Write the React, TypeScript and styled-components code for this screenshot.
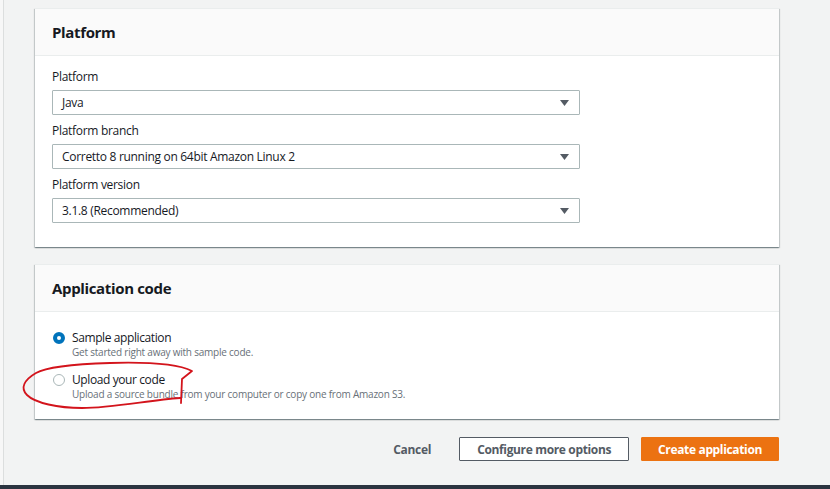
import React from "react";
import styled, { createGlobalStyle } from "styled-components";

const Global = createGlobalStyle`
  html, body {
    margin: 0;
    padding: 0;
    background: #f2f3f3;
    font-family: "Open Sans", "Noto Sans", sans-serif;
    color: #16191f;
  }
  * { box-sizing: border-box; }
`;

const Shell = styled.div`
  position: relative;
  width: 830px;
  height: 489px;
  overflow: hidden;
  display: flex;
  flex-direction: column;
  background: #f2f3f3;
`;

const Body = styled.div`
  flex: 1;
  display: flex;
  min-height: 0;
`;

const Rail = styled.div`
  width: 4px;
  background: #f7f7f7;
  border-right: 1px solid #dcdede;
`;

const Main = styled.main`
  flex: 1;
  padding: 8px 0 0 31px;
  display: flex;
  flex-direction: column;
  gap: 17px;
  width: 775px;
`;

const Panel = styled.section`
  width: 744px;
  background: #fff;
  border-top: 1px solid #eaeded;
  box-shadow: 0 1px 1px 0 rgba(0, 28, 36, 0.3), 1px 1px 1px 0 rgba(0, 28, 36, 0.15),
    -1px 1px 1px 0 rgba(0, 28, 36, 0.15);
`;

const PanelHeader = styled.header`
  height: 47px;
  background: #fafafa;
  border-bottom: 1px solid #eaeded;
  display: flex;
  align-items: center;
  padding: 0 17px;
`;

const PanelTitle = styled.h2`
  margin: 0 0 1px;
  font-size: 15px;
  font-weight: 700;
  letter-spacing: -0.35px;
  color: #16191f;
`;

const PanelBody = styled.div<{ $pad: string }>`
  padding: ${(p) => p.$pad};
  display: flex;
  flex-direction: column;
`;

const Field = styled.div`
  display: flex;
  flex-direction: column;
  margin-bottom: 8px;
  &:last-child { margin-bottom: 0; }
`;

const Label = styled.label`
  font-size: 12px;
  line-height: 16px;
  letter-spacing: -0.3px;
  color: #16191f;
  margin-bottom: 5px;
`;

const Select = styled.div`
  width: 528px;
  height: 25px;
  border: 1px solid #aab7b8;
  border-radius: 1px;
  display: flex;
  align-items: center;
  justify-content: space-between;
  padding: 0 10px 0 9px;
  font-size: 12px;
  letter-spacing: -0.3px;
  color: #16191f;
`;

const Caret = styled.svg`
  width: 9px;
  height: 6px;
  fill: #545b64;
`;

const RadioRow = styled.div`
  display: flex;
  align-items: flex-start;
  gap: 7px;
  margin-bottom: 13px;
  &:last-child { margin-bottom: 0; }
`;

const RadioDot = styled.span<{ $on?: boolean }>`
  width: 12px;
  height: 12px;
  border-radius: 50%;
  margin-top: 2px;
  flex-shrink: 0;
  background: #fff;
  border: ${(p) => (p.$on ? "4px solid #0073bb" : "1px solid #aab7b8")};
`;

const RadioText = styled.div`
  display: flex;
  flex-direction: column;
`;

const RadioLabel = styled.span`
  font-size: 12px;
  line-height: 16px;
  letter-spacing: -0.4px;
  color: #16191f;
`;

const RadioHint = styled.span`
  font-size: 10px;
  line-height: 13px;
  letter-spacing: -0.22px;
  color: #687078;
`;

const Actions = styled.div`
  width: 744px;
  display: flex;
  justify-content: flex-end;
  align-items: center;
  margin-top: 1px;
`;

const LinkButton = styled.button`
  background: none;
  border: none;
  font-family: inherit;
  font-size: 12px;
  font-weight: 700;
  letter-spacing: -0.3px;
  color: #545b64;
  padding: 0;
  margin-right: 28px;
`;

const Button = styled.button<{ $primary?: boolean }>`
  height: 24px;
  padding: 0 ${(p) => (p.$primary ? "16px" : "17px")};
  margin-left: ${(p) => (p.$primary ? "12px" : "0")};
  font-family: inherit;
  font-size: 12px;
  font-weight: 700;
  letter-spacing: -0.35px;
  border-radius: 1px;
  background: ${(p) => (p.$primary ? "#ec7211" : "#fff")};
  color: ${(p) => (p.$primary ? "#fff" : "#545b64")};
  border: 1px solid ${(p) => (p.$primary ? "#ec7211" : "#545b64")};
`;

const Footer = styled.div`
  height: 4px;
  background: #2b3440;
`;

const Scribble = styled.svg`
  position: absolute;
  left: 0;
  top: 0;
  width: 830px;
  height: 489px;
  pointer-events: none;
`;

const CaretIcon = () => (
  <Caret viewBox="0 0 9 6">
    <path d="M0 0h9L4.5 6z" />
  </Caret>
);

const fields = [
  { label: "Platform", value: "Java" },
  { label: "Platform branch", value: "Corretto 8 running on 64bit Amazon Linux 2" },
  { label: "Platform version", value: "3.1.8 (Recommended)" },
];

export default function App() {
  return (
    <>
      <Global />
      <Shell>
        <Body>
          <Rail />
          <Main>
            <Panel>
              <PanelHeader>
                <PanelTitle>Platform</PanelTitle>
              </PanelHeader>
              <PanelBody $pad="13px 17px 24px">
                {fields.map((f) => (
                  <Field key={f.label}>
                    <Label>{f.label}</Label>
                    <Select>
                      <span>{f.value}</span>
                      <CaretIcon />
                    </Select>
                  </Field>
                ))}
              </PanelBody>
            </Panel>
            <Panel>
              <PanelHeader>
                <PanelTitle>Application code</PanelTitle>
              </PanelHeader>
              <PanelBody $pad="18px 18px 18px">
                <RadioRow>
                  <RadioDot $on />
                  <RadioText>
                    <RadioLabel>Sample application</RadioLabel>
                    <RadioHint>Get started right away with sample code.</RadioHint>
                  </RadioText>
                </RadioRow>
                <RadioRow>
                  <RadioDot />
                  <RadioText>
                    <RadioLabel>Upload your code</RadioLabel>
                    <RadioHint>
                      Upload a source bundle from your computer or copy one from Amazon S3.
                    </RadioHint>
                  </RadioText>
                </RadioRow>
              </PanelBody>
            </Panel>
            <Actions>
              <LinkButton>Cancel</LinkButton>
              <Button>Configure more options</Button>
              <Button $primary>Create application</Button>
            </Actions>
          </Main>
        </Body>
        <Footer />
        <Scribble viewBox="0 0 830 489">
          <path
            d="M181 403 L182 379 L192 371 C178 364 145 362 110 363 C78 364 48 366 36 373 C24 380 20 388 27 395 C35 403 58 408 82 408 C112 408 150 400 180 398"
            fill="none"
            stroke="#d3141c"
            strokeWidth="1.8"
            strokeLinecap="round"
            strokeLinejoin="round"
          />
        </Scribble>
      </Shell>
    </>
  );
}
